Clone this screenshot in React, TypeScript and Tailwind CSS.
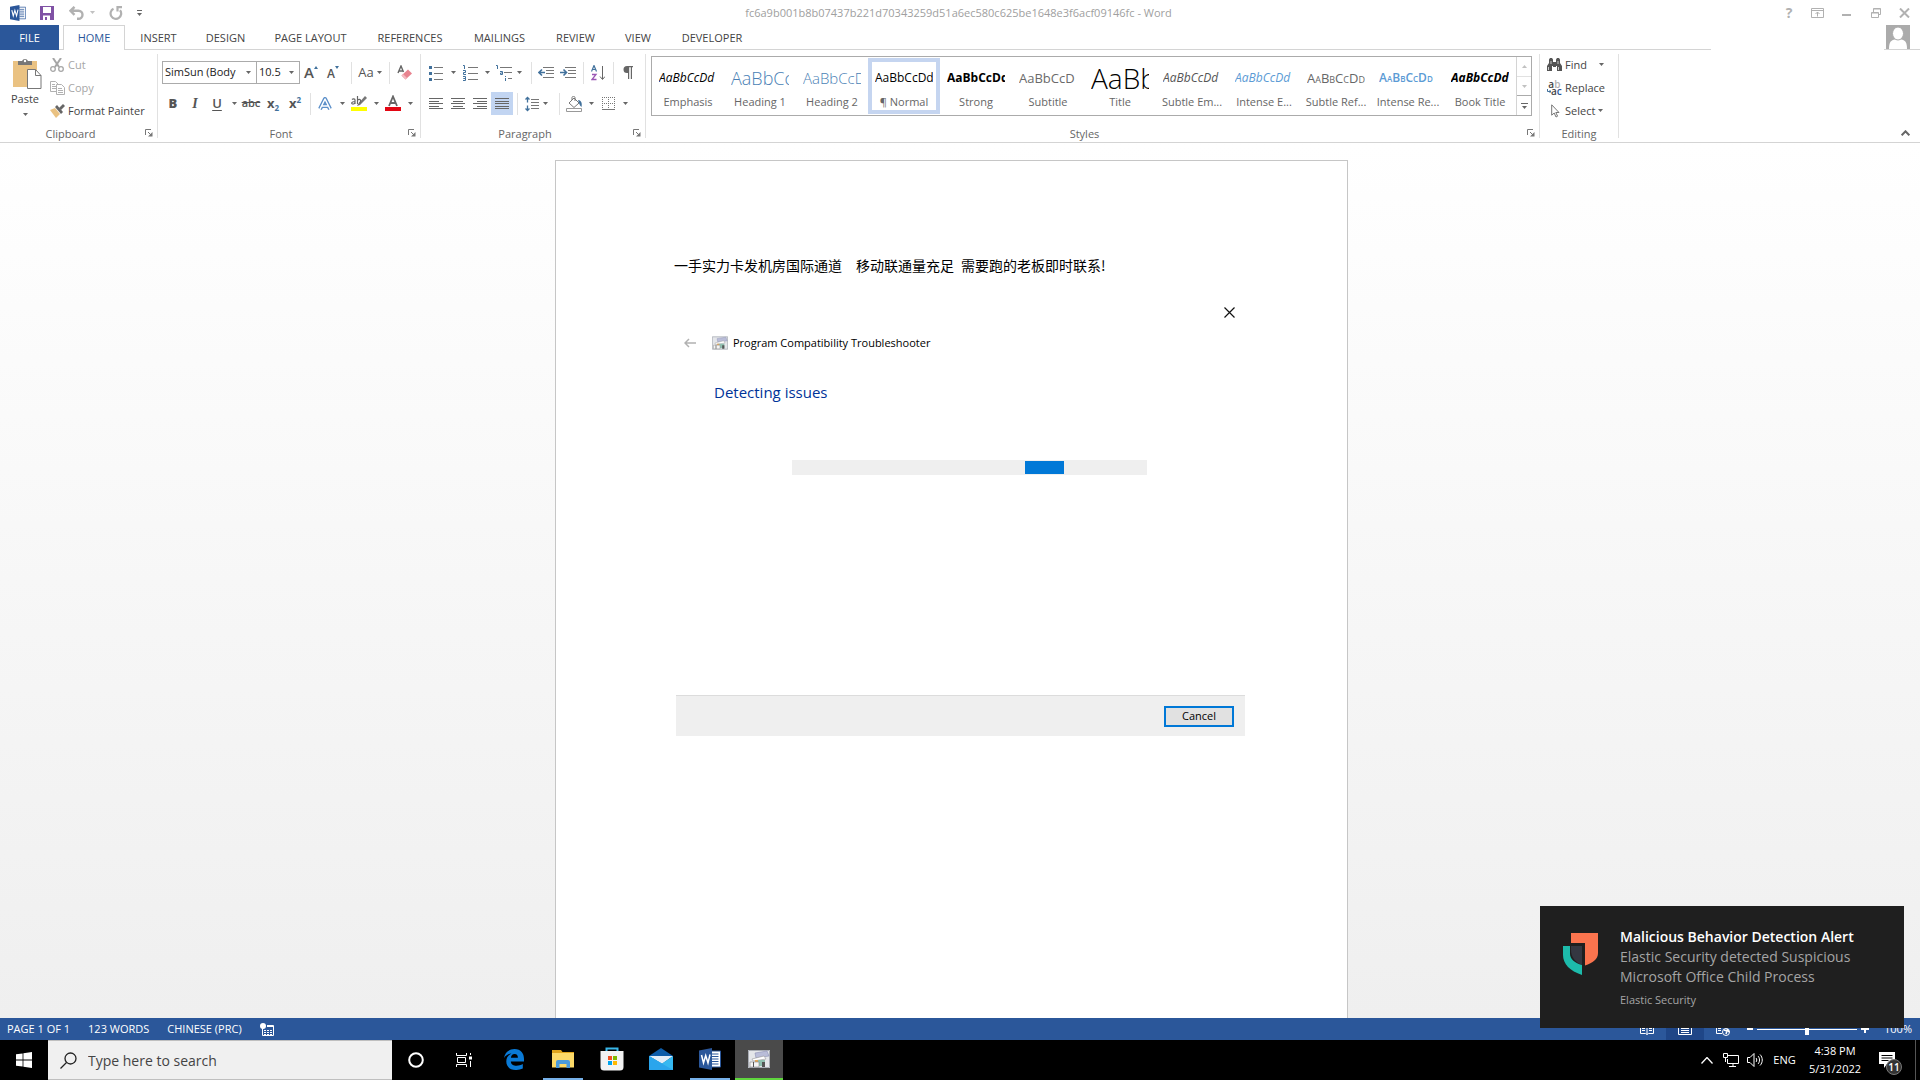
import React from "react";
import clsx from "clsx";

type Children = { children?: React.ReactNode };

/* ---------- small shared parts ---------- */

const Caret = ({ className }: { className?: string }) => (
  <svg viewBox="0 0 5 3" className={clsx("w-[5px] h-[3px] shrink-0", className)}>
    <path d="M0 0h5L2.500 3z" fill="#666" />
  </svg>
);

const CaretButton = ({ label }: { label: string }) => (
  <button aria-label={label} className="w-3 h-[22px] flex items-center justify-center">
    <Caret />
  </button>
);

const ToolButton = ({
  label,
  active,
  children,
}: { label: string; active?: boolean } & Children) => (
  <button
    aria-label={label}
    className={clsx(
      "w-[22px] h-[23px] flex items-center justify-center text-[#555] whitespace-nowrap",
      active && "bg-[#c2d5f2]"
    )}
  >
    {children}
  </button>
);

const Divider = () => (
  <div className="w-2 h-[22px] flex justify-center">
    <div className="w-px h-full bg-[#e1e1e1]" />
  </div>
);

const Launcher = ({ label }: { label: string }) => (
  <button aria-label={label} className="p-px">
    <svg viewBox="0 0 8 8" className="w-2 h-2" fill="none" stroke="#777">
      <path d="M.5 6V.5H6M3 3l3 3" />
      <path d="M7.500 3v4.500H3z" fill="#777" stroke="none" />
    </svg>
  </button>
);

const RibbonGroup = ({
  title,
  className,
  launcher = true,
  children,
}: { title: string; className: string; launcher?: boolean } & Children) => (
  <section className={clsx("flex flex-col border-r border-[#e1e1e1] shrink-0", className)}>
    <div className="h-[74px] flex">{children}</div>
    <div className="h-2.5 flex items-center px-[3px]">
      <h2
        className={clsx(
          "flex-1 pt-0.5 text-center text-[11px] leading-3 text-[#666]",
          launcher && "pr-1.5"
        )}
      >
        {title}
      </h2>
      {launcher && <Launcher label={title + " settings"} />}
    </div>
  </section>
);

/* ---------- title bar ---------- */

const WordIcon = ({ className }: { className?: string }) => (
  <svg viewBox="0 0 22 22" className={className}>
    <path d="M12 3h9.500v16H12z" fill="#fff" stroke="#2b579a" />
    <path d="M13 6h6.500M13 8.500h6.500M13 11h6.500M13 13.500h6.500M13 16h6.500" stroke="#2b579a" />
    <path d="M0 2.500 13 0v22L0 19.500z" fill="#2b579a" />
    <path d="m2.500 7 2 8 2.200-7.500L9 15l2-8.500" fill="none" stroke="#fff" strokeWidth="1.500" />
  </svg>
);

const TitleBar = () => (
  <header className="h-[25px] flex items-center justify-between pl-2.5 pr-[9px]">
    <div className="flex-1 flex items-center">
      <WordIcon className="w-4 h-4" />
      <button aria-label="Save" className="ml-3.5">
        <svg viewBox="0 0 14 14" className="w-3.5 h-3.5">
          <path d="M0 0h14v14H0z" fill="#8052a5" />
          <path d="M3 1h8v6H3zM3 9.500h7V14H3z" fill="#fff" />
          <path d="M5 11h2v3H5z" fill="#8052a5" />
        </svg>
      </button>
      <button aria-label="Undo" className="ml-[15px]">
        <svg viewBox="0 0 15 14" className="w-[15px] h-3.5" fill="none" stroke="#b1b1b1" strokeWidth="2.400">
          <path d="M5.500 .8 1.500 4.800l4 4M2 4.800h7.500a4 4 0 0 1 0 8H8" />
        </svg>
      </button>
      <Caret className="ml-1.5 opacity-40" />
      <button aria-label="Redo" className="ml-3.5">
        <svg viewBox="0 0 14 14" className="w-3.5 h-3.5" fill="none" stroke="#b1b1b1" strokeWidth="2.200">
          <path d="M4.500 2.800A5.300 5.300 0 1 0 11 4.200M8.500 5.500V1.200H13" />
        </svg>
      </button>
      <button aria-label="Customize toolbar" className="ml-3.5 flex flex-col items-center gap-0.5">
        <span className="w-[5px] h-px bg-[#666]" />
        <Caret />
      </button>
    </div>
    <h1 className="text-[11px] leading-4 text-[#a0a0a0] pr-1">
      fc6a9b001b8b07437b221d70343259d51a6ec580c625be1648e3f6acf09146fc - Word
    </h1>
    <div className="flex-1 flex items-center justify-end gap-4 text-[#b1b1b1]">
      <button aria-label="Help" className="w-3 text-sm leading-4 font-bold">?</button>
      <button aria-label="Ribbon display options">
        <svg viewBox="0 0 13 10" className="w-[13px] h-2.5" fill="none" stroke="currentColor">
          <path d="M.5.5h12v9H.5zM.5 2.500h12M6.500 8.500V4M4.500 6l2-2 2 2" />
        </svg>
      </button>
      <button aria-label="Minimize">
        <svg viewBox="0 0 13 10" className="w-[13px] h-2.5">
          <path d="M2 6h9v2H2z" fill="currentColor" />
        </svg>
      </button>
      <button aria-label="Restore">
        <svg viewBox="0 0 13 10" className="w-[13px] h-2.5" fill="none" stroke="currentColor">
          <path d="M2.500 4.500h7v5h-7zM2.500 5h7M4.500 4V.5h7v6H10M4.500 1h7" />
        </svg>
      </button>
      <button aria-label="Close">
        <svg viewBox="0 0 13 10" className="w-[13px] h-2.5" fill="none" stroke="currentColor" strokeWidth="2">
          <path d="m2 .5 9 9M11 .5l-9 9" />
        </svg>
      </button>
    </div>
  </header>
);

/* ---------- tabs ---------- */

const tabs = [
  { name: "INSERT", width: "w-[67px]" },
  { name: "DESIGN", width: "w-[67px]" },
  { name: "PAGE LAYOUT", width: "w-[103px]" },
  { name: "REFERENCES", width: "w-24" },
  { name: "MAILINGS", width: "w-[83px]" },
  { name: "REVIEW", width: "w-[69px]" },
  { name: "VIEW", width: "w-14" },
  { name: "DEVELOPER", width: "w-[92px]" },
];

const TabRow = () => (
  <nav className="h-[25px] flex text-[11px] leading-4 text-[#444]">
    <button className="w-[59px] bg-[#2b579a] text-white">FILE</button>
    <div className="w-1 border-b border-[#d4d4d4]" />
    <button className="w-[62px] border border-b-0 border-[#d4d4d4] text-[#2b579a]">HOME</button>
    <div className="flex-1 flex pt-px border-b border-[#d4d4d4]">
      {tabs.map((tab) => (
        <button key={tab.name} className={tab.width}>
          {tab.name}
        </button>
      ))}
    </div>
    <div className="w-[173px]" />
    <div className="w-9 border-b border-[#d4d4d4]">
      <button aria-label="Account" className="block pl-0.5">
        <svg viewBox="0 0 24 24" className="w-6 h-6">
          <path d="M0 0h24v24H0z" fill="#ababab" />
          <path d="M3 24c0-7 2-9 6-9.500h6c4 .5 6 2.500 6 9.500z" fill="#fff" />
          <ellipse cx="12" cy="8.500" rx="5.500" ry="6.500" fill="#fff" stroke="#ababab" />
        </svg>
      </button>
    </div>
  </nav>
);

/* ---------- ribbon groups ---------- */

const LabelButton = ({
  label,
  muted,
  caret,
  icon,
}: {
  label: string;
  muted?: boolean;
  caret?: boolean;
  icon: React.ReactNode;
}) => (
  <button
    className={clsx(
      "h-[23px] pb-0.5 flex items-center text-[11px] leading-4 whitespace-nowrap",
      muted ? "text-[#a6a6a6]" : "text-[#444]"
    )}
  >
    <span className="w-[18px] flex">{icon}</span>
    {label}
    {caret && <Caret className={label === "Find" ? "ml-3" : "ml-[3px]"} />}
  </button>
);

const ClipboardGroup = () => (
  <RibbonGroup title="Clipboard" className="w-[158px]">
    <button className="w-[50px] pt-1 flex flex-col items-center justify-start text-[11px] leading-4 text-[#444]">
      <svg viewBox="0 0 30 31" className="w-[30px] h-[31px] ml-1">
        <path d="M1 3h24v26H1z" fill="#eac282" />
        <path d="M6 7V3h4a3.200 3.200 0 0 1 6 0h4v4z" fill="#777" />
        <circle cx="13" cy="3" r="1.200" fill="#fff" />
        <path d="M15.500 11.500h8l5.500 6v13H15.500z" fill="#fff" stroke="#777" />
        <path d="M23.500 11.500v6H29" fill="none" stroke="#777" />
      </svg>
      <span className="mt-0.5">Paste</span>
      <Caret className="mt-1.5" />
    </button>
    <div className="flex flex-col">
      <LabelButton
        label="Cut"
        muted
        icon={
          <svg viewBox="0 0 14 14" className="w-3.5 h-3.5" fill="none" stroke="#a6a6a6" strokeWidth="1.300">
            <path d="m3 0 6 9M11 0 5 9" strokeWidth="2" />
            <circle cx="3" cy="11" r="2.300" />
            <circle cx="11" cy="11" r="2.300" />
          </svg>
        }
      />
      <LabelButton
        label="Copy"
        muted
        icon={
          <svg viewBox="0 0 15 14" className="w-[15px] h-3.5" fill="#fff" stroke="#b1b1b1">
            <path d="M.5.5h5l3 3v7h-8zM2 3.500h3M2 5.500h4M2 7.500h4" />
            <path d="M6.500 3.500h5l3 3v7h-8zM8 7.500h4M8 9.500h5M8 11.500h5" />
          </svg>
        }
      />
      <LabelButton
        label="Format Painter"
        icon={
          <svg viewBox="0 0 15 14" className="w-[15px] h-3.5">
            <path d="M0 6 5 4l5 6-4 4z" fill="#eac282" />
            <path d="m5 3 2-2 6 7-2 2z" fill="#666" />
            <path d="m9 4 4-4 2 2-4 4z" fill="#666" />
          </svg>
        }
      />
    </div>
  </RibbonGroup>
);

const Combo = ({ label, value, className }: { label: string; value: string; className: string }) => (
  <label className={clsx("relative h-[23px] border border-[#ababab] block", className)}>
    <select
      aria-label={label}
      defaultValue={value}
      className="block appearance-none w-full h-[21px] pb-0.5 pl-0.5 pr-3 text-[11px] leading-4 text-[#222] bg-white outline-none"
    >
      <option>{value}</option>
    </select>
    <Caret className="absolute right-[5px] top-[9px] pointer-events-none" />
  </label>
);

const FontGroup = () => (
  <RibbonGroup title="Font" className="w-[263px]">
    <div className="pl-1 flex flex-col">
      <div className="flex items-center pt-[7px]">
        <Combo label="Font name" value="SimSun (Body" className="w-[94px] border-r-0" />
        <Combo label="Font size" value="10.5" className="w-11" />
        <ToolButton label="Grow font">
          <span className="text-[15px] font-semibold">A</span>
          <svg viewBox="0 0 4 3" className="w-1 h-[3px] -mt-2.5">
            <path d="M0 3h4L2 0z" fill="#41719c" />
          </svg>
        </ToolButton>
        <ToolButton label="Shrink font">
          <span className="text-xs font-semibold pt-0.5">A</span>
          <svg viewBox="0 0 4 3" className="w-1 h-[3px] -mt-2.5">
            <path d="M0 0h4L2 3z" fill="#41719c" />
          </svg>
        </ToolButton>
        <div className="w-[3px]" />
        <Divider />
        <ToolButton label="Change case">
          <span className="text-[13px]">Aa</span>
        </ToolButton>
        <div className="-ml-1">
          <CaretButton label="Case options" />
        </div>
        <Divider />
        <ToolButton label="Clear formatting">
          <svg viewBox="0 0 15 15" className="w-[15px] h-[15px]">
            <path d="m1 8 3-7 2.500 6M2 6h4" fill="none" stroke="#666" strokeWidth="1.400" />
            <path d="m4.500 10.500 6.500-6 4 4-6.500 6z" fill="#e8838f" />
            <path d="m4.500 10.500 1.500-1.500 4 4-1.500 1.500z" fill="#f4b9c0" />
          </svg>
        </ToolButton>
      </div>
      <div className="flex items-center pt-2">
        <ToolButton label="Bold">
          <span className="text-[13px] font-extrabold">B</span>
        </ToolButton>
        <ToolButton label="Italic">
          <span className="text-sm font-bold italic font-['Liberation_Serif',serif]">I</span>
        </ToolButton>
        <ToolButton label="Underline">
          <span className="text-[13px] font-semibold underline underline-offset-2">U</span>
        </ToolButton>
        <CaretButton label="Underline options" />
        <ToolButton label="Strikethrough">
          <span className="text-[11px] font-semibold line-through">abc</span>
        </ToolButton>
        <ToolButton label="Subscript">
          <span className="text-[13px] font-bold">x</span>
          <span className="text-[8px] font-bold text-[#41719c] pt-2">2</span>
        </ToolButton>
        <ToolButton label="Superscript">
          <span className="text-[13px] font-bold">x</span>
          <span className="text-[8px] font-bold text-[#41719c] pb-2">2</span>
        </ToolButton>
        <Divider />
        <ToolButton label="Text effects">
          <svg viewBox="0 0 14 14" className="w-3.5 h-3.5" fill="none" strokeLinejoin="round">
            <path d="m2 12 5-10 5 10M4 9h6" stroke="#5b8fc9" strokeWidth="4" />
            <path d="m2 12 5-10 5 10M4 9h6" stroke="#fff" strokeWidth="1.500" />
          </svg>
        </ToolButton>
        <CaretButton label="Text effect options" />
        <ToolButton label="Highlight colour">
          <svg viewBox="0 0 16 17" className="w-4 h-[17px]">
            <path d="M0 12h16v4H0z" fill="#ff0" />
            <path d="m7 9 7-8 2 2-7 7-3 1z" fill="#777" />
            <path d="M1 4.500c1-1 3-1 3 .5v4M4 6.500c-4 0-4 2.500-2 2.500 1 0 2-1 2-1.500M6.500 1v8M6.500 5c3-2 4 1 2 3" fill="none" stroke="#666" strokeWidth="1.200" />
          </svg>
        </ToolButton>
        <CaretButton label="Highlight options" />
        <ToolButton label="Font colour">
          <svg viewBox="0 0 16 17" className="w-4 h-[17px]">
            <path d="M0 12h16v4H0z" fill="#e30613" />
            <path d="M4 11 8 1.500 12 11M5.500 8h5" fill="none" stroke="#666" strokeWidth="1.800" />
          </svg>
        </ToolButton>
        <CaretButton label="Font colour options" />
      </div>
    </div>
  </RibbonGroup>
);

/* text lines, drawn from a list of [x, width] pairs */
const Lines = ({ rows }: { rows: number[][] }) => (
  <svg viewBox="0 0 14 11" className="w-3.5 h-[11px]">
    {rows.map(([x, width], i) => (
      <rect key={i} x={x} y={[0, 3, 5, 8, 10][i]} width={width} height="1" fill="#666" />
    ))}
  </svg>
);

const ListIcon = ({ kind }: { kind: "bullet" | "number" | "level" }) => (
  <svg viewBox="0 0 16 16" className="w-4 h-4" fill="none">
    {kind === "bullet" && (
      <>
        <path d="M6 2.500h9M6 8.500h9M6 14.500h9" stroke="#777" />
        <path d="M1 1h3v3H1zM1 7h3v3H1zM1 13h3v3H1z" fill="#41719c" />
      </>
    )}
    {kind === "number" && (
      <>
        <path d="M6 2.500h10M6 8.500h10M6 14.500h10" stroke="#777" />
        <path d="M1 .5h1.500V4M1 5.500h2.500v2H1.500v2H4M1 11.500h2.500v2H1.500h2v2H1" stroke="#41719c" />
      </>
    )}
    {kind === "level" && (
      <>
        <path d="M4 2.500h12M8 7.500h8M12 13.500h4" stroke="#777" />
        <path d="M0 .5h1.500V4M4 6.500h2.500v3H4.500v-1.500H6M9.500 11v1M9.500 13v3" stroke="#41719c" />
      </>
    )}
  </svg>
);

const IndentIcon = ({ increase }: { increase?: boolean }) => (
  <svg viewBox="0 0 16 12" className="w-4 h-3" fill="none">
    <path d="M5 .5h11M8 3.500h8M8 6.500h8M5 10.500h11" stroke="#777" />
    <path
      d={increase ? "M0 5.500h6M3.500 2.500l3 3-3 3" : "M7 5.500H1M4 2.500l-3 3 3 3"}
      stroke="#41719c"
      strokeWidth="1.600"
    />
  </svg>
);

const ParagraphGroup = () => (
  <RibbonGroup title="Paragraph" className="w-[225px]">
    <div className="pl-1 flex flex-col">
      <div className="flex items-center pt-[7px]">
        <ToolButton label="Bullets">
          <ListIcon kind="bullet" />
        </ToolButton>
        <CaretButton label="Bullet options" />
        <ToolButton label="Numbering">
          <ListIcon kind="number" />
        </ToolButton>
        <CaretButton label="Numbering options" />
        <ToolButton label="Multilevel list">
          <ListIcon kind="level" />
        </ToolButton>
        <div className="-ml-0.5">
          <CaretButton label="Multilevel options" />
        </div>
        <div className="w-0.5" />
        <Divider />
        <ToolButton label="Decrease indent">
          <IndentIcon />
        </ToolButton>
        <ToolButton label="Increase indent">
          <IndentIcon increase />
        </ToolButton>
        <Divider />
        <ToolButton label="Sort">
          <svg viewBox="0 0 14 16" className="w-3.5 h-4" fill="none">
            <path d="m.5 6.500 2.500-6 2.500 6M1.500 4.500h3" stroke="#41719c" strokeWidth="1.200" />
            <path d="M1 9.500h4l-4 5h4.500" stroke="#9a57b5" strokeWidth="1.300" />
            <path d="M11.500 1v13M9 11.500l2.500 3 2.500-3" stroke="#666" />
          </svg>
        </ToolButton>
        <Divider />
        <ToolButton label="Show marks">
          <svg viewBox="0 0 10 13" className="w-2.5 h-[13px]">
            <path d="M4 0h6v1.200H9V13H7.800V1.200H6.200V13H5V7H4a3.500 3.500 0 0 1 0-7z" fill="#666" />
          </svg>
        </ToolButton>
      </div>
      <div className="flex items-center pt-2">
        <ToolButton label="Align left">
          <Lines rows={[[0, 14], [0, 10], [0, 14], [0, 10], [0, 14]]} />
        </ToolButton>
        <ToolButton label="Center">
          <Lines rows={[[0, 14], [2, 10], [0, 14], [2, 10], [0, 14]]} />
        </ToolButton>
        <ToolButton label="Align right">
          <Lines rows={[[0, 14], [4, 10], [0, 14], [4, 10], [0, 14]]} />
        </ToolButton>
        <ToolButton label="Justify" active>
          <Lines rows={[[0, 14], [0, 14], [0, 14], [0, 14], [0, 14]]} />
        </ToolButton>
        <Divider />
        <ToolButton label="Line spacing">
          <svg viewBox="0 0 14 16" className="w-3.5 h-4" fill="none">
            <path d="M6 3.500h8M6 6.500h8M6 9.500h8M6 12.500h8" stroke="#777" />
            <path d="M2.500 1v5.500M.5 3.500l2-2 2 2M2.500 9.500V15M.5 12.500l2 2 2-2" stroke="#41719c" strokeWidth="1.300" />
          </svg>
        </ToolButton>
        <div className="-ml-1">
          <CaretButton label="Spacing options" />
        </div>
        <div className="w-1" />
        <Divider />
        <ToolButton label="Shading">
          <svg viewBox="0 0 17 16" className="w-[17px] h-4" fill="none">
            <path d="M.5 12.500h15v3H.5z" stroke="#999" />
            <path d="m3 7 5-5 5 5-5 4.500zM6 4V1.500C6 0 9 0 9 1.500V5" stroke="#777" />
            <path d="M12 4c3 0 4.500 3 3.500 7-1-1-2-2-2.500-4z" fill="#41719c" />
          </svg>
        </ToolButton>
        <CaretButton label="Shading options" />
        <ToolButton label="Borders">
          <svg viewBox="0 0 13 13" className="w-[13px] h-[13px]" fill="none" stroke="#777">
            <path d="M.5 0v12M12.500 0v12M6.500 0v12M0 .5h13M0 6.500h13" strokeDasharray="1 1" />
            <path d="M0 12.500h13" />
          </svg>
        </ToolButton>
        <CaretButton label="Border options" />
      </div>
    </div>
  </RibbonGroup>
);

const textStyles = [
  { name: "Emphasis", sample: "AaBbCcDd", look: "text-xs italic text-black" },
  { name: "Heading 1", sample: "AaBbCc", look: "text-lg text-[#4a7fb5] font-light" },
  { name: "Heading 2", sample: "AaBbCcD", look: "text-[15px] text-[#4a7fb5] font-light" },
  { name: "¶ Normal", sample: "AaBbCcDd", look: "text-xs text-black", selected: true },
  { name: "Strong", sample: "AaBbCcDd", look: "text-xs font-bold text-black" },
  { name: "Subtitle", sample: "AaBbCcD", look: "text-[13px] text-[#6a6a6a]" },
  { name: "Title", sample: "AaBb", look: "text-[28px] text-black font-light" },
  { name: "Subtle Em...", sample: "AaBbCcDd", look: "text-xs italic text-[#555]" },
  { name: "Intense E...", sample: "AaBbCcDd", look: "text-xs italic text-[#5b9bd5]" },
  { name: "Subtle Ref...", sample: "AaBbCcDd", look: "text-[13px] [font-variant-caps:small-caps] text-[#666]" },
  { name: "Intense Re...", sample: "AaBbCcDd", look: "text-xs font-semibold [font-variant-caps:small-caps] text-[#5b9bd5]" },
  { name: "Book Title", sample: "AaBbCcDd", look: "text-xs font-bold italic text-black" },
];

const StylesGroup = () => (
  <RibbonGroup title="Styles" className="w-[894px]">
    <div className="ml-[5px] mt-0.5 h-[60px] flex border border-[#ababab]">
      {textStyles.map((style) => (
        <button
          key={style.name}
          className={clsx(
            "w-[72px] h-14 mt-px px-[3px] border-4 flex flex-col items-center justify-start",
            style.selected ? "border-[#c5d5f0]" : "border-transparent"
          )}
        >
          <span
            className={clsx(
              "w-[58px] h-8 leading-8 shrink-0 overflow-hidden whitespace-nowrap text-left",
              style.look
            )}
          >
            {style.sample}
          </span>
          <span className="shrink-0 text-[11px] leading-4 text-[#666] whitespace-nowrap">{style.name}</span>
        </button>
      ))}
      <div className="w-[15px] flex flex-col border-l border-[#d4d4d4]">
        <button aria-label="Scroll up" className="h-5 flex items-center justify-center border-b border-[#e1e1e1]">
          <Caret className="rotate-180 opacity-40" />
        </button>
        <button aria-label="Scroll down" className="h-[18px] flex items-center justify-center">
          <Caret className="opacity-40" />
        </button>
        <button
          aria-label="More styles"
          className="flex-1 flex flex-col items-center justify-center gap-0.5 border-t border-[#ababab]"
        >
          <span className="w-[7px] h-px bg-[#666]" />
          <Caret />
        </button>
      </div>
    </div>
  </RibbonGroup>
);

const EditingGroup = () => (
  <RibbonGroup title="Editing" className="w-[79px]" launcher={false}>
    <div className="pl-[7px] flex flex-col">
      <LabelButton
        label="Find"
        caret
        icon={
          <svg viewBox="0 0 15 13" className="w-[15px] h-[13px]">
            <path d="M2 1.500 3 0h2l1 1.500V4h3V1.500L10 0h2l1 1.500V5l2 3v5h-5V8H9v1H6V8H5v5H0V8l2-3z" fill="#555" />
            <path d="M1.500 9v3M11.500 9v3M4 3v3M11 3v3" stroke="#fff" strokeWidth=".7" />
          </svg>
        }
      />
      <LabelButton
        label="Replace"
        icon={
          <span className="flex flex-col text-[10px] leading-[7px] font-semibold">
            <span>
              a<span className="text-[#b1b1b1]">b</span>
            </span>
            <span className="flex items-center">
              <svg viewBox="0 0 4 5" className="w-1 h-[5px]" fill="none" stroke="#41719c">
                <path d="M.5 0v2.500H4M2.500 1 4 2.500 2.500 4" />
              </svg>
              a<span className="text-[#2b579a]">c</span>
            </span>
          </span>
        }
      />
      <LabelButton
        label="Select"
        caret
        icon={
          <svg viewBox="0 0 9 14" className="w-[9px] h-3.5 ml-1" fill="#fff" stroke="#777">
            <path d="M.7.8v10.400L3.200 9l1.800 4 1.600-.8L4.800 8.500H8z" />
          </svg>
        }
      />
    </div>
  </RibbonGroup>
);

const Ribbon = () => (
  <div className="h-[93px] flex items-start pt-1 border-b border-[#d4d4d4]">
    <ClipboardGroup />
    <FontGroup />
    <ParagraphGroup />
    <StylesGroup />
    <EditingGroup />
    <div className="flex-1 self-stretch flex items-end justify-end pr-2.5 pb-1.5">
      <button aria-label="Collapse ribbon">
        <svg viewBox="0 0 9 6" className="w-[9px] h-1.5" fill="none" stroke="#666" strokeWidth="2">
          <path d="m.7 5.300 3.800-4 3.800 4" />
        </svg>
      </button>
    </div>
  </div>
);

/* ---------- document ---------- */

const TroubleshooterIcon = ({ className }: { className?: string }) => (
  <svg viewBox="0 0 22 18" className={className}>
    <path d="M0 0h22v18H0z" fill="#e4e6ea" />
    <path d="M.5.5h21v17H.5z" fill="none" stroke="#a9adb5" />
    <path d="m7 3 12-2 2 5-13 2z" fill="#b9bdd8" stroke="#8d92b5" strokeWidth=".6" />
    <path d="M4 9 16 6l2 3-13 2z" fill="#fff" stroke="#999" strokeWidth=".6" />
    <path d="M9 10h8v6H9z" fill="#8fc0b0" />
    <path d="M7 10h3v3H7z" fill="#e3a55a" />
    <path d="M2 12h9v5H2z" fill="#f5f5f5" stroke="#888" strokeWidth=".6" />
    <path d="M14 12h3v5h-3zM5 12h1v5H5z" fill="#555" />
  </svg>
);

const Troubleshooter = () => (
  <section className="w-[569px] ml-0.5 mt-5 text-black">
    <div className="flex justify-end pr-2.5 pt-3">
      <button aria-label="Close dialog">
        <svg viewBox="0 0 11 11" className="w-[11px] h-[11px]" fill="none" stroke="#111" strokeWidth="1.200">
          <path d="m.5.5 10 10M10.500.5l-10 10" />
        </svg>
      </button>
    </div>
    <div className="flex items-center pl-2 pt-[17px]">
      <button aria-label="Back">
        <svg viewBox="0 0 12 10" className="w-3 h-2.5" fill="none" stroke="#b1b1b1" strokeWidth="1.500">
          <path d="M12 5H1M5 1 1 5l4 4" />
        </svg>
      </button>
      <TroubleshooterIcon className="w-4 h-3.5 ml-4 mr-[5px]" />
      <span className="text-[11px] leading-4">Program Compatibility Troubleshooter</span>
    </div>
    <h2 className="pl-[38px] pt-[31px] text-[15px] leading-5 text-[#003399]">Detecting issues</h2>
    <div className="h-[293px] pt-[58px] pl-[116px]">
      <div
        role="progressbar"
        aria-label="Detecting issues"
        className="w-[355px] h-[15px] py-px bg-[#efefef] flex"
      >
        <div className="w-[39px] h-[13px] ml-[233px] bg-[#0078d7]" />
      </div>
    </div>
    <div className="h-[41px] flex items-center justify-end pr-[11px] bg-[#efefef] border-t border-[#dcdcdc]">
      <button className="w-[70px] h-[21px] border-2 border-[#0078d7] bg-[#e1e1e1] text-[11px] leading-4">
        Cancel
      </button>
    </div>
  </section>
);

const Document = () => (
  <main className="flex-1 flex justify-center pt-[17px] pr-[17px] bg-linear-to-b from-white to-[#efefef]">
    <article className="w-[793px] pl-[118px] pt-[94px] bg-white border border-b-0 border-[#c6c6c6]">
      <p className="text-sm leading-5 text-black font-['Noto_Sans_CJK_SC',sans-serif]">
        一手实力卡发机房国际通道&#x3000;移动联通量充足&#x2002;需要跑的老板即时联系!
      </p>
      <Troubleshooter />
    </article>
  </main>
);

/* ---------- status bar ---------- */

const StatusBar = () => (
  <footer className="h-[22px] flex items-center justify-between pl-[7px] pr-2 bg-[#2b579a] text-[11px] leading-4 text-white">
    <div className="flex items-center gap-[18px]">
      <span>PAGE 1 OF 1</span>
      <span>123 WORDS</span>
      <span>CHINESE (PRC)</span>
      <svg viewBox="0 0 14 13" className="w-3.5 h-[13px]" fill="none" stroke="#fff">
        <path d="M2.500 5v7.500h11v-10H7M7 3.500h6" />
        <path d="M4 7.500h8M4 9.500h8M4 11.500h8" strokeDasharray="2 1" />
        <circle cx="3" cy="3" r="3" fill="#fff" stroke="none" />
      </svg>
    </div>
    <div className="flex items-center h-full">
      <button aria-label="Read mode" className="w-[38px] h-full flex items-center justify-center">
        <svg viewBox="0 0 14 12" className="w-3.5 h-3" fill="none" stroke="#fff">
          <path d="M7 1.500 5.500.5h-5v10h5L7 11.500l1.500-1h5V.5h-5zv10M2 3.500h3M2 5.500h3M2 7.500h3M9 3.500h3M9 5.500h3M9 7.500h3" />
        </svg>
      </button>
      <button aria-label="Print layout" className="w-[38px] h-full flex items-center justify-center bg-[#1f4687]">
        <svg viewBox="0 0 14 12" className="w-3.5 h-3" fill="none" stroke="#fff">
          <path d="M.5.5h13v11H.5zM3 3.500h8M3 5.500h8M3 7.500h8M3 9.500h8" />
        </svg>
      </button>
      <button aria-label="Web layout" className="w-[38px] h-full flex items-center justify-center">
        <svg viewBox="0 0 14 13" className="w-3.5 h-[13px]" fill="none" stroke="#fff">
          <path d="M6 10.500H.5V.5h11V4M2 3.500h5M2 5.500h3M2 7.500h3" />
          <circle cx="10" cy="9" r="3.500" />
          <path d="M8 7l3 1-1 3M11 6l2 3" strokeWidth="1.500" />
        </svg>
      </button>
      <button aria-label="Zoom out" className="w-[15px] flex justify-center">
        <span className="w-1.5 h-0.5 bg-white" />
      </button>
      <input
        type="range"
        aria-label="Zoom"
        defaultValue={50}
        className="appearance-none w-[100px] h-[11px] bg-transparent [&::-webkit-slider-runnable-track]:h-px [&::-webkit-slider-runnable-track]:bg-white [&::-webkit-slider-thumb]:appearance-none [&::-webkit-slider-thumb]:w-1 [&::-webkit-slider-thumb]:h-[11px] [&::-webkit-slider-thumb]:-mt-[5px] [&::-webkit-slider-thumb]:bg-white"
      />
      <button aria-label="Zoom in" className="w-[15px] flex justify-center">
        <svg viewBox="0 0 8 8" className="w-2 h-2" stroke="#fff" strokeWidth="2">
          <path d="M4 0v8M0 4h8" />
        </svg>
      </button>
      <span className="w-10 text-right">100%</span>
    </div>
  </footer>
);

/* ---------- taskbar ---------- */

const apps = [
  {
    name: "Edge",
    icon: (
      <svg viewBox="0 0 20 21" className="w-5 h-[21px]">
        <path
          d="M0 9C.8 3.500 5 0 10.500 0 17 0 20 4.500 20 10v2.500H6.800c.2 3 2.800 4.300 5.700 4.300 2.300 0 4.400-.6 6.300-1.700v4.400A16 16 0 0 1 11.500 21C6 21 2.300 17.500 2.300 12.500c0-3.500 1.900-6.500 5.200-8C4.500 4.800 2 6 0 9zm6.900-.2h7c0-2.300-1-3.800-3.300-3.800S7.200 6.600 6.900 8.800z"
          fill="#0a7ad6"
        />
      </svg>
    ),
  },
  {
    name: "File Explorer",
    line: "border-[#76b0e8]",
    icon: (
      <svg viewBox="0 0 22 18" className="w-[22px] h-[18px]">
        <path d="M0 0h9l1.500 2H22v4H0z" fill="#e0a41c" />
        <path d="M0 3h22v14.500H0z" fill="#fcd968" />
        <path d="M4 18v-6a2 2 0 0 1 2-2h10a2 2 0 0 1 2 2v6h-3.500v-4h-7v4z" fill="#4a9bdc" />
      </svg>
    ),
  },
  {
    name: "Store",
    icon: (
      <svg viewBox="0 0 24 24" className="w-6 h-6">
        <path d="M6.500 6V1.500h11V6" fill="none" stroke="#38b6e8" strokeWidth="2" />
        <path d="M.5 4h23v16a3.500 3.500 0 0 1-3.500 3.500H4A3.500 3.500 0 0 1 .5 20z" fill="#f3f3f3" />
        <path d="M8 9h4v4H8z" fill="#f25022" />
        <path d="M13 9h4v4h-4z" fill="#7fba00" />
        <path d="M8 14h4v4H8z" fill="#00a4ef" />
        <path d="M13 14h4v4h-4z" fill="#ffb900" />
      </svg>
    ),
  },
  {
    name: "Mail",
    icon: (
      <svg viewBox="0 0 24 22" className="w-6 h-[22px]">
        <path d="M0 8 12 0l12 8v2H0z" fill="#0d5ca8" />
        <path d="M0 8h24L13 16z" fill="#e3edf7" />
        <path d="M0 8v14h24V8l-11 7.500z" fill="#35b8f1" />
        <path d="m0 8 24 14H0z" fill="#2aa5ec" />
      </svg>
    ),
  },
  {
    name: "Word",
    line: "border-[#76b0e8]",
    icon: <WordIcon className="w-[22px] h-[22px]" />,
  },
  {
    name: "Program Compatibility Troubleshooter",
    line: "border-[#5fd63e] bg-[#4a4a4a]",
    icon: <TroubleshooterIcon className="w-[22px] h-[18px]" />,
  },
];

const Taskbar = () => (
  <nav className="h-10 flex items-center bg-black text-white">
    <button aria-label="Start" className="w-12 flex justify-center">
      <svg viewBox="0 0 16 16" className="w-4 h-4" fill="#fff">
        <path d="m0 2.300 6.600-.9v6.200H0zM7.400 1.300 16 0v7.600H7.400zM0 8.400h6.600v6.200L0 13.700zM7.400 8.400H16V16l-8.600-1.200z" />
      </svg>
    </button>
    <label className="w-[344px] h-10 pl-3 flex items-center gap-[11px] bg-[#f0f0f0] border-y border-[#bfbfbf]">
      <svg viewBox="0 0 17 17" className="w-[17px] h-[17px]" fill="none" stroke="#222" strokeWidth="1.300">
        <circle cx="10.500" cy="6.500" r="5.500" />
        <path d="M6.500 10.500.5 16.500" />
      </svg>
      <input
        aria-label="Search"
        placeholder="Type here to search"
        className="flex-1 pt-0.5 text-sm leading-5 bg-transparent outline-none placeholder:text-[#444]"
      />
    </label>
    <button aria-label="Cortana" className="w-12 flex justify-center">
      <svg viewBox="0 0 16 16" className="w-4 h-4" fill="none" stroke="#fff" strokeWidth="2">
        <circle cx="8" cy="8" r="6.800" />
      </svg>
    </button>
    <button aria-label="Task view" className="w-12 flex justify-center">
      <svg viewBox="0 0 16 16" className="w-4 h-4" fill="none" stroke="#fff">
        <path d="M.5 1v2.500h10V1M.5 15v-2.500h10V15M1.500 5.500h8v5h-8zM14.500 1v2M14.500 9v6" />
        <path d="M13 4.500h3v3h-3z" fill="#fff" stroke="none" />
      </svg>
    </button>
    <div className="flex gap-px ml-0.5">
      {apps.map((app) => (
        <button
          key={app.name}
          aria-label={app.name}
          className={clsx(
            "h-10 border-b-2 flex items-center justify-center",
            app.name.startsWith("Program") ? "w-12" : "w-10 mx-1",
            app.line || "border-transparent"
          )}
        >
          {app.icon}
        </button>
      ))}
    </div>
    <div className="flex-1 flex items-center justify-end h-full">
      <button aria-label="Show hidden icons">
        <svg viewBox="0 0 12 7" className="w-3 h-[7px]" fill="none" stroke="#fff" strokeWidth="1.300">
          <path d="m.5 6.500 5.500-6 5.500 6" />
        </svg>
      </button>
      <button aria-label="Network" className="ml-2.5">
        <svg viewBox="0 0 16 14" className="w-4 h-3.5" fill="none" stroke="#fff">
          <path d="M5 2.500h10.500v8H4.500V6M10 10.500v3M6 13.500h7M.5.5h4v4h-4zM2.500 4.500V9" />
        </svg>
      </button>
      <button aria-label="Volume" className="ml-2">
        <svg viewBox="0 0 17 14" className="w-[17px] h-3.5" fill="none" stroke="#fff">
          <path d="M.5 4.500h2.500l4-4v13l-4-4H.5zM9 5c1 1 1 3 0 4M11 3c2 2 2 6 0 8M13 1.500c3 3 3 8 0 11" />
        </svg>
      </button>
      <span className="w-[41px] text-center text-[11px] leading-4">ENG</span>
      <time className="w-[60px] text-center text-[11px] leading-[18px] whitespace-nowrap">
        4:38 PM
        <br />
        5/31/2022
      </time>
      <button aria-label="Notifications" className="relative ml-3.5 mr-5">
        <svg viewBox="0 0 16 16" className="w-4 h-4">
          <path d="M0 0h16v12h-8l-3 4v-4H0z" fill="#fff" />
          <path d="M2.500 3.500h11M2.500 6h11M2.500 8.500h7" stroke="#000" />
        </svg>
        <span className="absolute left-[7px] top-[7px] w-4 h-4 rounded-full bg-[#333] border border-[#777] text-[10px] leading-[14px] text-center font-semibold">
          11
        </span>
      </button>
      <div className="w-[5px] h-full border-l border-[#555]" />
    </div>
  </nav>
);

/* ---------- toast ---------- */

const Toast = () => (
  <aside
    role="alert"
    className="fixed right-4 bottom-[52px] w-[364px] h-[122px] flex bg-[#1f1f1f] text-[#a5a5a5]"
  >
    <svg viewBox="0 0 35 42" className="w-[35px] h-[42px] ml-[23px] mt-[27px]">
      <path d="M8 0h27v20c0 6-5 10-13 12.500V10H8z" fill="#fb744e" />
      <path d="M8 13h11v19C12 29 8 24 8 17z" fill="#343741" />
      <path d="M0 13h7v8c0 5 5 9 12 11v10C7 38 0 31 0 22z" fill="#1dbbab" />
    </svg>
    <div className="ml-[22px] mt-[21px]">
      <h2 className="text-sm leading-5 font-semibold text-white">Malicious Behavior Detection Alert</h2>
      <p className="text-sm leading-5">
        Elastic Security detected Suspicious
        <br />
        Microsoft Office Child Process
      </p>
      <p className="mt-[3px] text-[11px] leading-5">Elastic Security</p>
    </div>
  </aside>
);

const App: React.FC = () => {
  return (
    <div className="min-h-screen flex flex-col bg-white overflow-hidden font-['Open_Sans','Noto_Sans',sans-serif]">
      <TitleBar />
      <TabRow />
      <Ribbon />
      <Document />
      <StatusBar />
      <Taskbar />
      <Toast />
    </div>
  );
};

export default App;
